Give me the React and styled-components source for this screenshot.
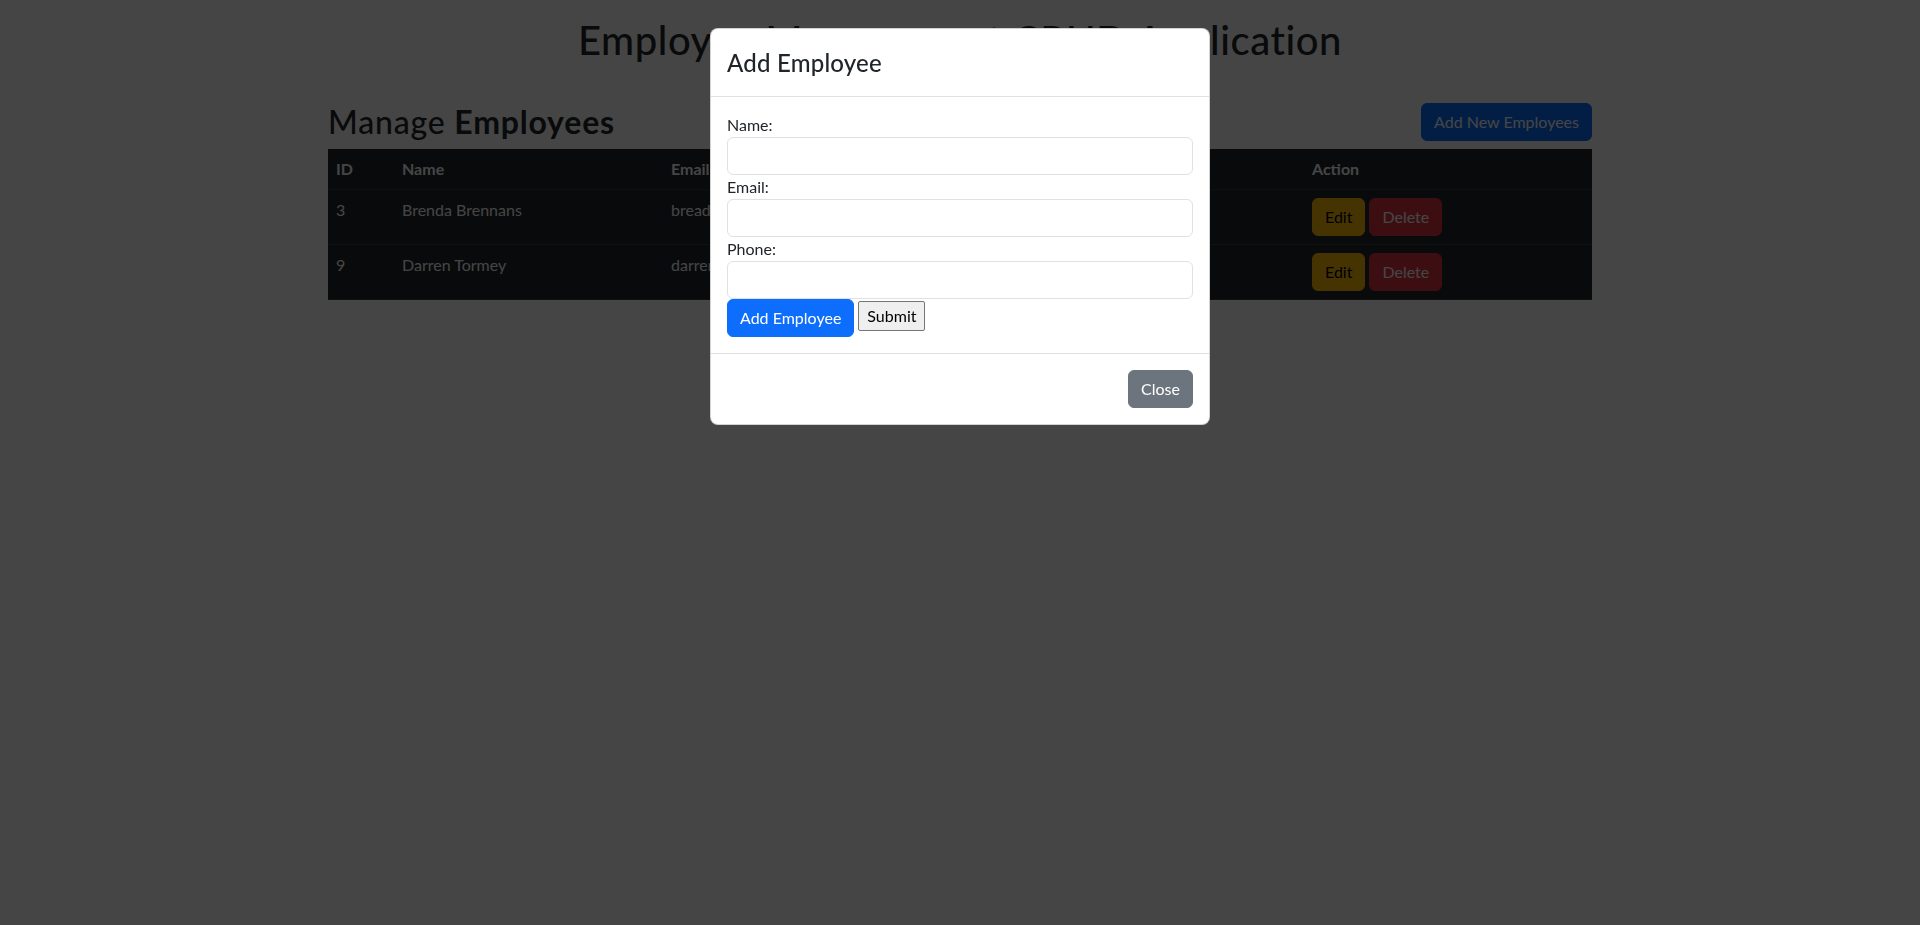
import React from "react";
import styled, { createGlobalStyle } from "styled-components";

const GlobalStyle = createGlobalStyle`
  *, *::before, *::after { box-sizing: border-box; }
  body {
    margin: 0;
    font-family: Lato, "Open Sans", sans-serif;
    font-size: 16px;
    line-height: 1.5;
    color: #212529;
    background: #fff;
  }
`;

const Page = styled.div`
  width: 1264px;
  margin: 0 auto;
`;

const Title = styled.h1`
  margin: 16px 0 0;
  text-align: center;
  font-size: 40px;
  font-weight: 500;
  letter-spacing: 0.55px;
  line-height: 1.2;
`;

const HeadRow = styled.div`
  display: flex;
  justify-content: space-between;
  align-items: center;
  height: 38px;
  margin: 39px 0 8px;
`;

const Heading = styled.h2`
  margin: 0;
  font-size: 32px;
  font-weight: 500;
  letter-spacing: 0.8px;
  line-height: 1.2;
  b { font-weight: 700; }
`;

const Btn = styled.button`
  display: inline-block;
  font-family: inherit;
  font-size: 16px;
  line-height: 24px;
  padding: 6px 12px;
  border: 1px solid ${(p) => p.$bg};
  border-radius: 6px;
  background: ${(p) => p.$bg};
  color: ${(p) => p.$fg || "#fff"};
  cursor: pointer;
`;

const Table = styled.table`
  width: 100%;
  border-collapse: collapse;
  table-layout: fixed;
  background: #212529;
  color: #fff;
`;

const Th = styled.th`
  text-align: left;
  vertical-align: top;
  padding: 8px;
  font-weight: 700;
  border-bottom: 1px solid #373b3e;
`;

const Td = styled.td`
  vertical-align: top;
  padding: 8px;
  border-bottom: 1px solid #373b3e;
`;

const Actions = styled.div`
  display: flex;
  gap: 4px;
`;

const Backdrop = styled.div`
  position: fixed;
  inset: 0;
  background: rgba(0, 0, 0, 0.73);
`;

const ModalLayer = styled.div`
  position: fixed;
  inset: 0;
  display: flex;
  justify-content: center;
  align-items: flex-start;
  padding-top: 28px;
`;

const Dialog = styled.div`
  width: 500px;
  background: #fff;
  border: 1px solid rgba(0, 0, 0, 0.175);
  border-radius: 8px;
`;

const ModalHeader = styled.div`
  padding: 16px;
  border-bottom: 1px solid #dee2e6;
`;

const ModalTitle = styled.h4`
  margin: 0;
  font-size: 24px;
  font-weight: 500;
  letter-spacing: 0.2px;
  line-height: 35px;
`;

const ModalBody = styled.div`
  padding: 16px;
`;

const Label = styled.label`
  display: block;
  line-height: 24px;
`;

const Input = styled.input`
  display: block;
  width: 100%;
  height: 38px;
  padding: 6px 12px;
  font-family: inherit;
  font-size: 16px;
  line-height: 24px;
  color: #212529;
  border: 1px solid #dee2e6;
  border-radius: 6px;
  background: #fff;
  outline: none;
`;

const FormActions = styled.div`
  display: flex;
  align-items: flex-start;
  gap: 4px;
`;

const PlainButton = styled.button`
  margin-top: 2px;
  font-family: inherit;
  font-size: 16px;
  line-height: 24px;
  padding: 2px 8px;
  border: 1px solid #767676;
  border-radius: 2px;
  background: #efefef;
  color: #000;
`;

const ModalFooter = styled.div`
  display: flex;
  justify-content: flex-end;
  padding: 12px;
  border-top: 1px solid #dee2e6;
  button { margin: 4px; }
`;

const employees = [
  { id: 3, name: "Brenda Brennans", email: "breadbrennans@gmail.com", phone: "0871234567" },
  { id: 9, name: "Darren Tormey", email: "darrentormey@gmail.com", phone: "0857654321" },
];

export default function App() {
  return (
    <>
      <GlobalStyle />
      <Page>
        <Title>Employee Management CRUD Application</Title>
        <HeadRow>
          <Heading>
            Manage <b>Employees</b>
          </Heading>
          <Btn $bg="#0d6efd">Add New Employees</Btn>
        </HeadRow>
        <Table>
          <colgroup>
            <col style={{ width: 66 }} />
            <col style={{ width: 269 }} />
            <col style={{ width: 320 }} />
            <col style={{ width: 321 }} />
            <col style={{ width: 288 }} />
          </colgroup>
          <thead>
            <tr>
              <Th>ID</Th>
              <Th>Name</Th>
              <Th>Email</Th>
              <Th>Phone</Th>
              <Th>Action</Th>
            </tr>
          </thead>
          <tbody>
            {employees.map((e) => (
              <tr key={e.id}>
                <Td>{e.id}</Td>
                <Td>{e.name}</Td>
                <Td>{e.email}</Td>
                <Td>{e.phone}</Td>
                <Td>
                  <Actions>
                    <Btn $bg="#ffc107" $fg="#000">Edit</Btn>
                    <Btn $bg="#dc3545">Delete</Btn>
                  </Actions>
                </Td>
              </tr>
            ))}
          </tbody>
        </Table>
      </Page>
      <Backdrop />
      <ModalLayer>
        <Dialog>
          <ModalHeader>
            <ModalTitle>Add Employee</ModalTitle>
          </ModalHeader>
          <ModalBody>
            <Label>Name:</Label>
            <Input type="text" />
            <Label>Email:</Label>
            <Input type="email" />
            <Label>Phone:</Label>
            <Input type="text" />
            <FormActions>
              <Btn $bg="#0d6efd">Add Employee</Btn>
              <PlainButton>Submit</PlainButton>
            </FormActions>
          </ModalBody>
          <ModalFooter>
            <Btn $bg="#6c757d">Close</Btn>
          </ModalFooter>
        </Dialog>
      </ModalLayer>
    </>
  );
}
